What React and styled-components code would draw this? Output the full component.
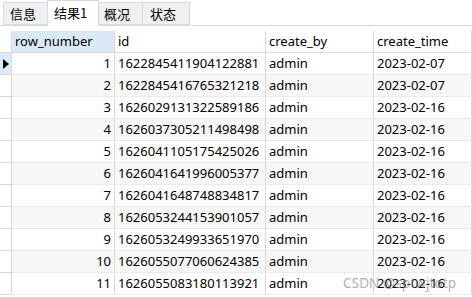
import React from "react";
import styled, { createGlobalStyle } from "styled-components";

const Global = createGlobalStyle`
  html, body { margin: 0; padding: 0; background: #fff; }
  body { font-family: "Noto Sans", "Noto Sans CJK SC", sans-serif; font-size: 13px; color: #000; }
`;

const Page = styled.div`
  width: 472px;
  height: 297px;
  position: relative;
  overflow: hidden;
  background: #fff;
`;

const TabBar = styled.div`
  display: flex;
  align-items: flex-end;
  height: 26px;
  box-sizing: border-box;
  border-bottom: 1px solid #dadada;
  padding-left: 3px;
`;

const Tab = styled.div`
  box-sizing: border-box;
  width: ${(p) => p.$w}px;
  height: ${(p) => (p.$active ? 26 : 23)}px;
  margin-bottom: ${(p) => (p.$active ? -1 : 0)}px;
  background: ${(p) => (p.$active ? "#fff" : "#f0f0f0")};
  border: 1px solid #dadada;
  border-bottom: ${(p) => (p.$active ? "none" : "1px solid #dadada")};
  margin-left: ${(p) => (p.$first ? 0 : -1)}px;
  display: flex;
  align-items: center;
  padding-left: ${(p) => p.$pad}px;
  padding-bottom: ${(p) => (p.$active ? 2 : 0)}px;
  font-size: 13px;
  font-family: "Noto Sans CJK SC", sans-serif;
  line-height: 1;
  position: relative;
  z-index: ${(p) => (p.$active ? 1 : 0)};
`;

const Grid = styled.div`
  margin-top: 5px;
  display: grid;
  grid-template-columns: 12px 103px 151px 108px 98px;
`;

const Cell = styled.div`
  box-sizing: border-box;
  height: 22px;
  border-right: 1px solid #d9d9d9;
  border-bottom: 1px solid ${(p) => (p.$head ? "#d9d9d9" : "#ebebeb")};
  background: ${(p) => p.$bg || "transparent"};
  display: flex;
  align-items: center;
  justify-content: ${(p) => (p.$right ? "flex-end" : "flex-start")};
  padding: ${(p) => (p.$right ? "0 3px 0 0" : "0 0 0 3px")};
  white-space: nowrap;
  overflow: hidden;
  font-size: 13px;
  line-height: 1;
`;

const Indicator = styled(Cell)`
  padding: 0;
  justify-content: center;
  border-bottom-color: #d9d9d9;
`;

const Triangle = styled.div`
  width: 0;
  height: 0;
  border-top: 5px solid transparent;
  border-bottom: 5px solid transparent;
  border-left: 6px solid #000;
  margin-left: 1px;
`;

const Watermark = styled.div`
  position: absolute;
  left: 343px;
  top: 274px;
  font-family: "Noto Sans", sans-serif;
  font-size: 13.5px;
  color: rgba(120, 120, 120, 0.6);
  letter-spacing: 0.1px;
  pointer-events: none;
`;

const rows = [
  ["1", "1622845411904122881", "admin", "2023-02-07"],
  ["2", "1622845416765321218", "admin", "2023-02-07"],
  ["3", "1626029131322589186", "admin", "2023-02-16"],
  ["4", "1626037305211498498", "admin", "2023-02-16"],
  ["5", "1626041105175425026", "admin", "2023-02-16"],
  ["6", "1626041641996005377", "admin", "2023-02-16"],
  ["7", "1626041648748834817", "admin", "2023-02-16"],
  ["8", "1626053244153901057", "admin", "2023-02-16"],
  ["9", "1626053249933651970", "admin", "2023-02-16"],
  ["10", "1626055077060624385", "admin", "2023-02-16"],
  ["11", "1626055083180113921", "admin", "2023-02-16"],
];

export default function App() {
  return (
    <Page>
      <Global />
      <TabBar>
        <Tab $w={45} $pad={6} $first>信息</Tab>
        <Tab $w={52} $pad={6} $active>结果1</Tab>
        <Tab $w={45} $pad={5}>概况</Tab>
        <Tab $w={48} $pad={7}>状态</Tab>
      </TabBar>
      <Grid>
        <Indicator $head />
        <Cell $head $bg="#dbe9f7">row_number</Cell>
        <Cell $head>id</Cell>
        <Cell $head>create_by</Cell>
        <Cell $head>create_time</Cell>
        {rows.map((r, i) => {
          const bg = i % 2 === 1 ? "#f7f7f7" : "#fff";
          return (
            <React.Fragment key={r[0]}>
              <Indicator $bg={i === 0 ? "#dbe9f7" : "#fff"}>{i === 0 && <Triangle />}</Indicator>
              <Cell $right $bg={bg}>{r[0]}</Cell>
              <Cell $bg={bg}>{r[1]}</Cell>
              <Cell $bg={bg}>{r[2]}</Cell>
              <Cell $bg={bg}>{r[3]}</Cell>
            </React.Fragment>
          );
        })}
      </Grid>
      <Watermark>CSDN @sptwjtotp</Watermark>
    </Page>
  );
}
